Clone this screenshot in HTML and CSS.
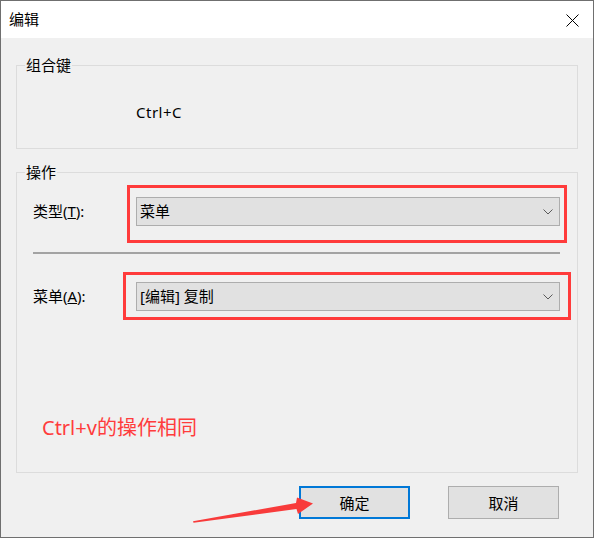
FILE: index.html
```html
<!DOCTYPE html>
<html lang="zh-CN">
<head>
<meta charset="utf-8">
<title>编辑</title>
<link rel="stylesheet" href="styles.css">
</head>
<body>
<div class="window">
  <div class="titlebar">
    <span class="title">编辑</span>
    <svg class="close" width="13" height="13" viewBox="0 0 13 13"><path d="M0.5 0.5 L12.5 12.5 M12.5 0.5 L0.5 12.5" stroke="#000" stroke-width="1" fill="none"/></svg>
  </div>
  <div class="content">
    <fieldset class="group group-keys">
      <legend>组合键</legend>
      <div class="keys">Ctrl+C</div>
    </fieldset>
    <fieldset class="group group-action">
      <legend>操作</legend>
      <div class="row row-type">
        <label class="label">类型(<u>T</u>):</label>
        <div class="combo mark mark-1"><span>菜单</span>
          <svg class="chev" width="10" height="6" viewBox="0 0 10 6"><path d="M0.5 0.5 L5 5 L9.5 0.5" stroke="#5a5a5a" stroke-width="1" fill="none"/></svg>
        </div>
      </div>
      <div class="sep"></div>
      <div class="row row-menu">
        <label class="label">菜单(<u>A</u>):</label>
        <div class="combo mark mark-2"><span>[编辑] 复制</span>
          <svg class="chev" width="10" height="6" viewBox="0 0 10 6"><path d="M0.5 0.5 L5 5 L9.5 0.5" stroke="#5a5a5a" stroke-width="1" fill="none"/></svg>
        </div>
      </div>
      <div class="note">Ctrl+v的操作相同</div>
    </fieldset>
    <div class="buttons">
      <button class="btn btn-default">确定</button>
      <button class="btn">取消</button>
    </div>
  </div>
  <svg class="arrow" width="594" height="539" viewBox="0 0 594 539">
    <polygon points="193,521.3 296,503 297,497.5 313,503.5 298,514 296.5,509 193.5,522.7" fill="#f83b3b"/>
  </svg>
</div>
</body>
</html>
```

FILE: styles.css
```css
html, body {
  margin: 0;
  padding: 0;
  background: #ffffff;
}

body {
  font-family: "Noto Sans", "Noto Sans CJK SC", sans-serif;
  font-size: 15px;
  line-height: 19px;
  color: #000;
}

.window {
  position: relative;
  width: 594px;
  height: 538px;
  box-sizing: border-box;
  border: 1px solid #6f6f6f;
  display: flex;
  flex-direction: column;
  background: #f0f0f0;
}

.titlebar {
  height: 37px;
  flex: none;
  background: #ffffff;
  display: flex;
  align-items: center;
  justify-content: space-between;
  padding: 0 14px 0 8px;
}

.title {
  display: block;
}

.close {
  display: block;
  margin-top: 1px;
}

.content {
  flex: 1;
  padding: 18px 15px 0 15px;
  display: flex;
  flex-direction: column;
}

.group {
  margin: 0;
  padding: 0;
  border: 1px solid #dcdcdc;
  min-width: 0;
}

.group legend {
  margin-left: 8px;
  padding: 0 1px;
  line-height: 19px;
}

.keys {
  margin-top: 27px;
  margin-bottom: 26px;
  padding-left: 119px;
  line-height: 20px;
  letter-spacing: 0.5px;
}

.group-action {
  margin-top: 14px;
  padding-bottom: 31px;
}

.row {
  display: flex;
  align-items: center;
  padding: 0 17px 0 16px;
}

.row-type {
  margin-top: 15px;
}

.row-menu {
  margin-top: 28px;
}

.label {
  width: 103px;
  flex: none;
}

.combo {
  position: relative;
  flex: 1;
  height: 29px;
  box-sizing: border-box;
  background: #e1e1e1;
  border: 1px solid #adadad;
  display: flex;
  align-items: center;
  justify-content: space-between;
  padding: 0 6px 0 3px;
}

.chev {
  display: block;
}

.mark::after {
  content: "";
  position: absolute;
  border: 3px solid #ff3b3b;
  pointer-events: none;
}

.mark-1::after {
  top: -13px;
  left: -10px;
  right: -8px;
  bottom: -18px;
}

.mark-2::after {
  top: -11px;
  left: -14px;
  right: -12px;
  bottom: -10px;
}

.sep {
  height: 2px;
  background: #a3a3a3;
  margin: 26px 17px 0 16px;
}

.note {
  margin-top: 104px;
  padding-left: 25px;
  font-size: 20px;
  line-height: 26px;
  color: #ff3c3c;
}

.buttons {
  display: flex;
  justify-content: flex-end;
  gap: 38px;
  margin-top: 13px;
  padding-right: 19px;
}

.btn {
  width: 111px;
  height: 33px;
  box-sizing: border-box;
  background: #e1e1e1;
  border: 1px solid #adadad;
  font-family: inherit;
  font-size: 15px;
  color: #000;
  padding: 0;
  margin: 0;
}

.btn-default {
  border: 2px solid #0078d7;
}

.arrow {
  position: absolute;
  top: -1px;
  left: -1px;
  pointer-events: none;
}
```
